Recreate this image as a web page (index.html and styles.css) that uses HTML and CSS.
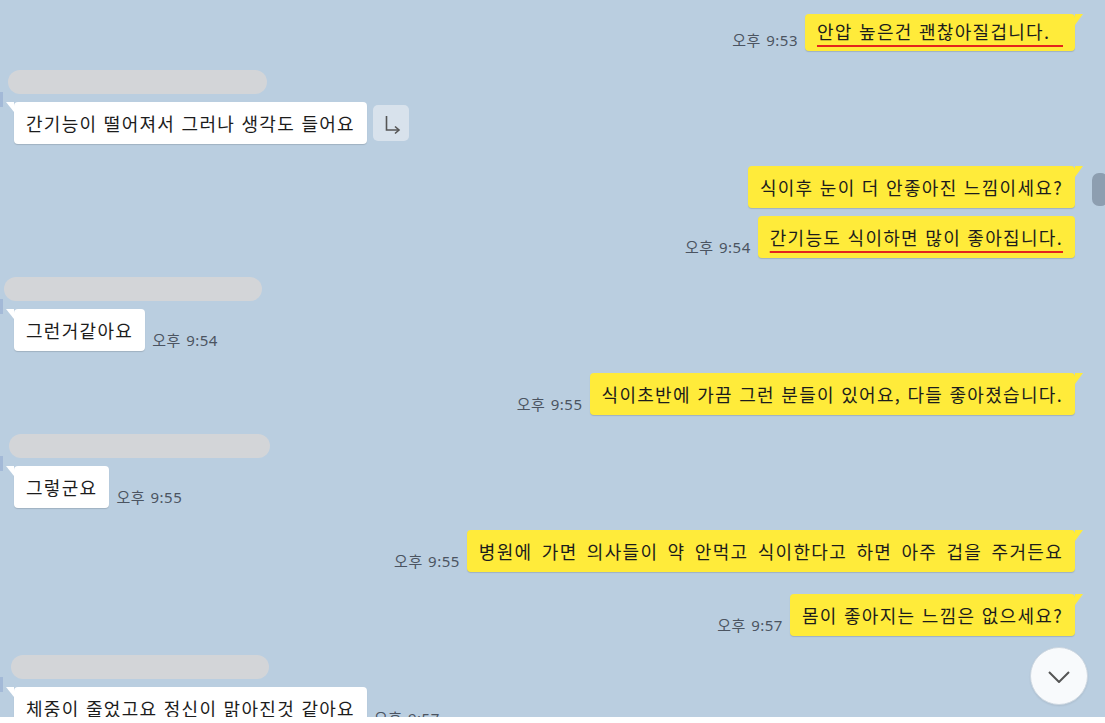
FILE: index.html
```html
<!DOCTYPE html>
<html lang="ko">
<head>
    <meta charset="UTF-8">
    <title>채팅</title>
    <link rel="stylesheet" href="styles.css">
</head>
<body>
<div class="screen">
    <div class="chat">
        <div class="sent">
            <div class="row">
                <span class="time">오후 9:53</span>
                <div class="bubble me tail first"><span class="mark">안압 높은건 괜찮아질겁니다.&nbsp;&nbsp;</span></div>
            </div>
        </div>

        <div class="recv">
            <div class="avatar"></div>
            <div class="name n1"></div>
            <div class="row">
                <div class="bubble you tail">간기능이 떨어져서 그러나 생각도 들어요</div>
                <button class="share">
                    <svg width="36" height="36" viewBox="0 0 36 36"><path d="M13.5 11v14h12" fill="none" stroke="#555" stroke-width="1.6"/><path d="M22 21.5l4 3.5-4 3.5" fill="none" stroke="#555" stroke-width="1.6"/></svg>
                </button>
            </div>
        </div>

        <div class="sent">
            <div class="row">
                <div class="bubble me tail">식이후 눈이 더 안좋아진 느낌이세요?</div>
            </div>
            <div class="row">
                <span class="time">오후 9:54</span>
                <div class="bubble me"><span class="mark">간기능도 식이하면 많이 좋아집니다.</span></div>
            </div>
        </div>

        <div class="recv">
            <div class="avatar"></div>
            <div class="name n2"></div>
            <div class="row">
                <div class="bubble you tail">그런거같아요</div>
                <span class="time">오후 9:54</span>
            </div>
        </div>

        <div class="sent">
            <div class="row">
                <span class="time">오후 9:55</span>
                <div class="bubble me tail">식이초반에 가끔 그런 분들이 있어요, 다들 좋아졌습니다.</div>
            </div>
        </div>

        <div class="recv">
            <div class="avatar"></div>
            <div class="name n3"></div>
            <div class="row">
                <div class="bubble you tail">그렇군요</div>
                <span class="time">오후 9:55</span>
            </div>
        </div>

        <div class="sent">
            <div class="row">
                <span class="time">오후 9:55</span>
                <div class="bubble me tail wide">병원에 가면 의사들이 약 안먹고 식이한다고 하면 아주 겁을 주거든요</div>
            </div>
        </div>

        <div class="sent">
            <div class="row">
                <span class="time">오후 9:57</span>
                <div class="bubble me tail">몸이 좋아지는 느낌은 없으세요?</div>
            </div>
        </div>

        <div class="recv">
            <div class="avatar"></div>
            <div class="name n4"></div>
            <div class="row">
                <div class="bubble you tail"><span class="mark">체중이 줄었고요 정신이 맑아진것 같아요</span></div>
                <span class="time">오후 9:57</span>
            </div>
        </div>
    </div>
    <div class="footer"></div>

    <div class="scrollbar"></div>
    <button class="down">
        <svg width="22" height="12" viewBox="0 0 22 12"><path d="M1 1l10 10 10-10" fill="none" stroke="#555" stroke-width="2"/></svg>
    </button>
</div>
</body>
</html>
```

FILE: styles.css
```css
* {
    box-sizing: border-box;
}

body, html {
    margin: 0;
    padding: 0;
}
body {
    background: #bacee0;
    font-family: "Noto Sans CJK KR", "Noto Sans", sans-serif;
    color: #1c1c1c;
    overflow: hidden;
}

.screen {
    height: 723px;
    display: flex;
    flex-direction: column;
    position: relative;
}

.chat {
    flex: 1;
    overflow: hidden;
    padding: 14px 30px 0 14px;
    display: flex;
    flex-direction: column;
}

.footer {
    flex: none;
    height: 6px;
    background: #fff;
}

.sent, .recv {
    display: flex;
    flex-direction: column;
    flex: none;
}
.sent {
    align-items: flex-end;
}
.recv {
    align-items: flex-start;
    position: relative;
}

.sent + .sent, .recv + .sent {
    margin-top: 22px;
}
.sent + .recv {
    margin-top: 19px;
}
.sent .row + .row {
    margin-top: 8px;
}

.row {
    display: flex;
    align-items: flex-end;
    gap: 7px;
}

.bubble {
    position: relative;
    padding: 9px 12px;
    font-size: 18px;
    line-height: 24px;
    letter-spacing: 1.3px;
    word-spacing: 0;
    border-radius: 4px;
    box-shadow: 0 1px 1px rgba(0, 0, 0, 0.14);
    white-space: nowrap;
}
.bubble.first {
    padding-top: 5px;
    padding-bottom: 8px;
}
.bubble.wide {
    word-spacing: 3px;
}
.me {
    background: #ffeb3a;
}
.you {
    background: #fff;
}

.tail.me::after {
    content: "";
    position: absolute;
    top: 0;
    right: -8px;
    border-top: 11px solid #ffeb3a;
    border-right: 8px solid transparent;
}
.tail.you::after {
    content: "";
    position: absolute;
    top: 0;
    left: -8px;
    border-top: 10px solid #fff;
    border-left: 8px solid transparent;
}

.mark {
    text-decoration: underline;
    text-decoration-color: #e4241c;
    text-decoration-thickness: 2px;
    text-underline-offset: 6px;
}

.time {
    font-family: "Noto Sans", "Noto Sans CJK KR", sans-serif;
    font-size: 15px;
    line-height: 16px;
    color: #4b5461;
    white-space: nowrap;
    letter-spacing: 0.5px;
    word-spacing: 1px;
    margin-bottom: 3px;
}

.name {
    height: 24px;
    width: 259px;
    border-radius: 12px;
    background: #d3d5d8;
    margin-bottom: 8px;
}
.n1 { margin-left: -6px; }
.n2 { margin-left: -10px; width: 258px; }
.n3 { margin-left: -5px; width: 261px; }
.n4 { margin-left: -3px; width: 258px; }

.avatar {
    position: absolute;
    left: -14px;
    top: 22px;
    width: 3px;
    height: 15px;
    background: #a3b9d7;
}

.share {
    width: 36px;
    height: 36px;
    padding: 0;
    border: none;
    border-radius: 5px;
    background: #d8e2ec;
    align-self: center;
    margin-left: -1px;
    display: flex;
    align-items: center;
    justify-content: center;
}

.scrollbar {
    position: absolute;
    right: -3px;
    top: 173px;
    width: 16px;
    height: 33px;
    border-radius: 7px;
    background: #8d9eb0;
}

.down {
    position: absolute;
    right: 17px;
    bottom: 18px;
    width: 58px;
    height: 58px;
    padding: 0;
    border: 1px solid #cdd7e1;
    border-radius: 50%;
    background: #f8fafc;
    box-shadow: 0 1px 2px rgba(0, 0, 0, 0.08);
    display: flex;
    align-items: center;
    justify-content: center;
}
.down svg {
    margin-top: 2px;
}
```
